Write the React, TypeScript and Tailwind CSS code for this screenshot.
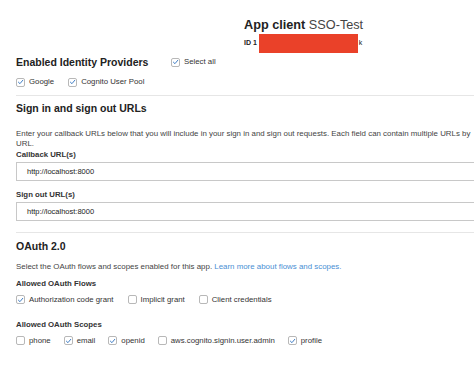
import { ReactNode } from "react";

function Check({ checked }: { checked?: boolean }) {
    return (
        <span className="flex h-[9px] w-[9px] shrink-0 items-center justify-center rounded-[2px] border border-[#b8b8b8] bg-white">
            {checked && (
                <svg viewBox="0 0 10 10" className="h-[8px] w-[8px]">
                    <path
                        d="M2 5.2 L4.2 7.4 L8.2 2.6"
                        fill="none"
                        stroke="#3b7bc4"
                        strokeWidth="1.4"
                        strokeLinecap="round"
                        strokeLinejoin="round"
                    />
                </svg>
            )}
        </span>
    );
}

function Option({ label, checked }: { label: string; checked?: boolean }) {
    return (
        <label className="flex h-[12px] items-center gap-[4px] text-[7.8px] leading-[12px] text-[#333]">
            <Check checked={checked} />
            <span>{label}</span>
        </label>
    );
}

function Heading({ children, className = "" }: { children: ReactNode; className?: string }) {
    return (
        <h2 className={`text-[10.5px] font-bold leading-[14px] text-[#222] ${className}`}>
            {children}
        </h2>
    );
}

function Label({ children, className = "" }: { children: ReactNode; className?: string }) {
    return (
        <div className={`text-[7.8px] font-bold leading-[10px] text-[#333] ${className}`}>
            {children}
        </div>
    );
}

function UrlField({ value, className = "" }: { value: string; className?: string }) {
    return (
        <div
            className={`flex h-[19px] w-[480px] items-center border border-[#c8c8c8] bg-white pl-[10px] text-[7.5px] text-[#222] ${className}`}
        >
            {value}
        </div>
    );
}

const flows = [
    { label: "Authorization code grant", checked: true },
    { label: "Implicit grant", checked: false },
    { label: "Client credentials", checked: false },
];

const scopes = [
    { label: "phone", checked: false },
    { label: "email", checked: true },
    { label: "openid", checked: true },
    { label: "aws.cognito.signin.user.admin", checked: false },
    { label: "profile", checked: true },
];

export default function App() {
    return (
        <div
            className="h-[369px] w-[474px] overflow-hidden bg-white"
            style={{ fontFamily: '"Liberation Sans", Arial, sans-serif' }}
        >
            {/* app client header */}
            <div className="pl-[244px] pt-[17px]">
                <h1 className="whitespace-nowrap text-[12.7px] leading-[16px] text-[#222]">
                    <span className="font-bold">App client</span>{" "}
                    <span className="text-[#444]">SSO-Test</span>
                </h1>
                <div className="mt-[1px] flex h-[19px] items-center text-[7px] font-bold text-[#222]">
                    <span className="mr-[2px]">ID 1</span>
                    <span className="h-[19px] w-[99px] bg-[#ea4129]" />
                    <span className="ml-[1px] font-normal">k</span>
                </div>
            </div>

            <div className="w-[520px] pl-4">
                {/* identity providers */}
                <div className="mt-[2px] flex items-center">
                    <Heading className="w-[155px]">Enabled Identity Providers</Heading>
                    <Option label="Select all" checked />
                </div>
                <div className="mt-[7px] flex gap-[14px]">
                    <Option label="Google" checked />
                    <Option label="Cognito User Pool" checked />
                </div>

                <div className="mt-[7px] border-t border-[#e6e6e6]" />

                {/* sign in / sign out urls */}
                <Heading className="mt-[5px]">Sign in and sign out URLs</Heading>
                <p className="mt-[14px] text-[7.9px] leading-[9.5px] text-[#444]">
                    <span className="block whitespace-nowrap">
                        Enter your callback URLs below that you will include in your sign in and sign out requests. Each field can contain multiple URLs by
                    </span>
                    <span className="block">URL.</span>
                </p>
                <Label className="mt-[2px]">Callback URL(s)</Label>
                <UrlField value="http://localhost:8000" className="mt-[2px]" />
                <Label className="mt-[9px]">Sign out URL(s)</Label>
                <UrlField value="http://localhost:8000" className="mt-[2px]" />

                <div className="mt-[11px] border-t border-[#e6e6e6]" />

                {/* oauth */}
                <Heading className="mt-[6px]">OAuth 2.0</Heading>
                <p className="mt-[9px] whitespace-nowrap text-[7.9px] leading-[9.5px] text-[#444]">
                    Select the OAuth flows and scopes enabled for this app.{" "}
                    <a href="#" className="text-[#4a8fd4]">
                        Learn more about flows and scopes.
                    </a>
                </p>
                <Label className="mt-[7px]">Allowed OAuth Flows</Label>
                <div className="mt-[5px] flex gap-[14px]">
                    {flows.map((f) => (
                        <Option key={f.label} label={f.label} checked={f.checked} />
                    ))}
                </div>
                <Label className="mt-[14px]">Allowed OAuth Scopes</Label>
                <div className="mt-[5px] flex gap-[13px]">
                    {scopes.map((s) => (
                        <Option key={s.label} label={s.label} checked={s.checked} />
                    ))}
                </div>
            </div>
        </div>
    );
}
